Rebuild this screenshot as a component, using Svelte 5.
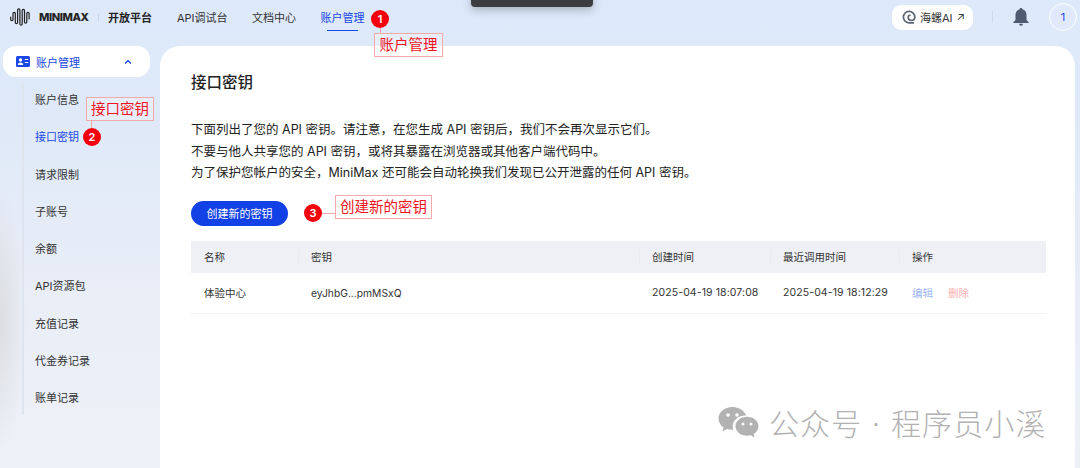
<script>
  const nav = [
    { label: 'API调试台' },
    { label: '文档中心' },
    { label: '账户管理', active: true }
  ];
  const side = [
    { label: '账户信息' },
    { label: '接口密钥', active: true },
    { label: '请求限制' },
    { label: '子账号' },
    { label: '余额' },
    { label: 'API资源包' },
    { label: '充值记录' },
    { label: '代金券记录' },
    { label: '账单记录' }
  ];
</script>

<div class="page">
  <header class="top">
    <div class="logo">
      <svg width="23" height="18" viewBox="0 0 23 18" fill="none" stroke="#222" stroke-width="1.200" stroke-linecap="round">
        <path d="M.7 9v2.500a1.150 1.150 0 0 0 2.300 0V5.500a1.150 1.150 0 0 1 2.300 0v9a1.150 1.150 0 0 0 2.300 0V2a1.150 1.150 0 0 1 2.300 0v14a1.150 1.150 0 0 0 2.300 0V2.500a1.150 1.150 0 0 1 2.300 0v11.500a1.150 1.150 0 0 0 2.300 0V5.500a1.150 1.150 0 0 1 2.300 0v5.500" />
      </svg>
      <span class="wordmark">MINIMAX</span>
    </div>
    <span class="tick"></span>
    <span class="platform">开放平台</span>
    <nav class="nav">
      {#each nav as n}
        <span class="nav-item" class:active={n.active}>{n.label}</span>
      {/each}
    </nav>
    <div class="top-right">
      <div class="hailuo">
        <svg width="14" height="14" viewBox="0 0 14 14" fill="none" stroke="#5c6672" stroke-width="1.700">
          <path d="M12 12.800H6.800A5.700 5.700 0 1 1 12.800 7c0 2.200-1.400 3.500-3.400 3.500S6.200 9 6.200 7.300 7.400 5 8.600 5.600" />
        </svg>
        <span>海螺AI</span>
        <span class="arrow">↗</span>
      </div>
      <span class="divider"></span>
      <svg class="bell" width="16" height="18" viewBox="0 0 16 18">
        <path fill="#4d5a70" d="M8 0c.8 0 1.300.5 1.400 1.200C12 1.900 13.500 4.200 13.500 7v5l2.200 2.200V15H.3v-.8L2.500 12V7c0-2.800 1.500-5.100 4.100-5.800C6.700.5 7.200 0 8 0z" />
        <path fill="#4d5a70" d="M6 15.800h4c0 1.300-.9 2-2 2s-2-.7-2-2z" />
      </svg>
      <span class="avatar">1</span>
    </div>
  </header>

  <div class="body">
    <aside class="side">
      <div class="group">
        <svg width="14" height="11" viewBox="0 0 14 11">
          <rect width="14" height="11" rx="1.500" fill="#1a47e5" />
          <circle cx="4.500" cy="4" r="1.700" fill="#fff" />
          <path d="M1.800 9c.2-1.700 1.300-2.400 2.700-2.400S7 7.300 7.200 9z" fill="#fff" />
          <path d="M8.800 3.500h3.500M8.800 6.500h3.500" stroke="#fff" stroke-width="1" />
        </svg>
        <span>账户管理</span>
        <svg class="chev" width="8" height="6" viewBox="0 0 8 6" fill="none" stroke="#1a47e5" stroke-width="1.400">
          <path d="M1 4.500L4 1.800l3 2.700" />
        </svg>
      </div>
      <ul class="menu">
        {#each side as s}
          <li class:active={s.active}>{s.label}</li>
        {/each}
      </ul>
    </aside>

    <main class="card">
      <h1>接口密钥</h1>
      <div class="intro">
        <p>下面列出了您的 API 密钥。请注意，在您生成 API 密钥后，我们不会再次显示它们。</p>
        <p>不要与他人共享您的 API 密钥，或将其暴露在浏览器或其他客户端代码中。</p>
        <p>为了保护您帐户的安全，MiniMax 还可能会自动轮换我们发现已公开泄露的任何 API 密钥。</p>
      </div>
      <button class="create">创建新的密钥</button>
      <div class="table">
        <div class="row head">
          <span>名称</span><span class="sep">密钥</span><span class="sep">创建时间</span><span class="sep">最近调用时间</span><span class="sep">操作</span>
        </div>
        <div class="row data">
          <span>体验中心</span>
          <span class="key">eyJhbG...pmMSxQ</span>
          <span class="time">2025-04-19 18:07:08</span>
          <span class="time">2025-04-19 18:12:29</span>
          <span class="ops"><em class="edit">编辑</em><em class="del">删除</em></span>
        </div>
      </div>
    </main>
  </div>

  <div class="toast"></div>

  <span class="dot d1">1</span>
  <span class="line l1"></span>
  <span class="note n1">账户管理</span>

  <span class="dot d2">2</span>
  <span class="line l2"></span>
  <span class="note n2">接口密钥</span>

  <span class="dot d3">3</span>
  <span class="line l3"></span>
  <span class="note n3">创建新的密钥</span>

  <div class="mark">
    <svg width="43" height="36" viewBox="0 0 42 36">
      <path fill="#b2b2b2" d="M15 1C7 1 1 6.200 1 12.500c0 3.600 2 6.800 5 8.900L4.800 25.500l4.800-2.500c1.600.5 3.300.8 5.100.8h1.100c-.4-1.200-.6-2.400-.6-3.600 0-6 5.700-10.800 12.700-10.800h.9C26.900 4.800 21.500 1 15 1z" />
      <path fill="#b2b2b2" d="M41 20.200c0-5.300-5.200-9.500-11.500-9.500S18 14.900 18 20.200s5.200 9.500 11.500 9.500c1.300 0 2.600-.2 3.800-.5l3.900 2.200-1-3.500c2.900-1.800 4.800-4.600 4.800-7.700z" />
      <circle cx="10.500" cy="9" r="1.800" fill="#fff" /><circle cx="19.500" cy="9" r="1.800" fill="#fff" />
      <circle cx="25.500" cy="18" r="1.500" fill="#fff" /><circle cx="33.500" cy="18" r="1.500" fill="#fff" />
    </svg>
    <span>公众号 · 程序员小溪</span>
  </div>
</div>

<style>
  :global(body) {
    margin: 0;
    background: #eef1f7;
  }
  .page {
    position: relative;
    width: 1080px;
    height: 468px;
    overflow: hidden;
    background:
      radial-gradient(ellipse 26px 130px at 0 320px, #dcdde0 0, rgba(222, 223, 226, 0) 100%),
      linear-gradient(180deg, #dde9fa 0, #dfe9f8 120px, #e9eef7 300px, #eef0f7 468px);
    font-family: Inter, "Noto Sans CJK SC", sans-serif;
    color: #222;
  }
  .top {
    height: 46px;
    display: flex;
    align-items: center;
    padding: 0 3px 12px 10px;
    box-sizing: border-box;
    font-size: 11px;
  }
  .logo {
    display: flex;
    align-items: center;
    gap: 6px;
  }
  .wordmark {
    width: 49px;
    font-weight: 800;
    font-size: 11px;
    letter-spacing: -0.4px;
    white-space: nowrap;
    color: #222;
  }
  .tick {
    width: 1px;
    height: 7px;
    background: #cdd6e4;
    margin: 0 9px 0 10px;
  }
  .platform {
    font-weight: 700;
    color: #222;
  }
  .nav {
    display: flex;
    gap: 24.500px;
    margin-left: 25px;
  }
  .nav-item {
    position: relative;
    color: #333;
  }
  .nav-item.active {
    color: #1a47e5;
  }
  .nav-item.active::after {
    content: '';
    position: absolute;
    left: 6px;
    right: 7px;
    bottom: -6px;
    height: 1.500px;
    background: #1a47e5;
  }
  .top-right {
    margin-left: auto;
    display: flex;
    align-items: center;
  }
  .hailuo {
    display: flex;
    align-items: center;
    gap: 4px;
    height: 25px;
    width: 81px;
    box-sizing: border-box;
    padding-left: 10px;
    background: #fff;
    border-radius: 9px;
    color: #333;
    font-size: 11px;
  }
  .arrow {
    font-size: 11px;
  }
  .divider {
    width: 1px;
    height: 12px;
    background: #cfd9e8;
    margin: 0 20px 0 19px;
  }
  .bell {
    margin-right: 20px;
  }
  .avatar {
    width: 28px;
    height: 28px;
    box-sizing: border-box;
    display: flex;
    align-items: center;
    justify-content: center;
    border-radius: 50%;
    border: 1px solid #fff;
    background: #e1eafc;
    color: #1a47e5;
    font-size: 11px;
  }
  .body {
    display: flex;
    height: 422px;
  }
  .side {
    width: 160px;
    flex: none;
    box-sizing: border-box;
    padding-left: 3px;
  }
  .group {
    width: 147px;
    height: 31px;
    box-sizing: border-box;
    background: #fff;
    border-radius: 13px;
    display: flex;
    align-items: center;
    padding: 0 18px 0 13px;
    gap: 6px;
    font-size: 11px;
    color: #1a47e5;
  }
  .chev {
    margin-left: auto;
  }
  .menu {
    list-style: none;
    margin: 6px 0 0 19px;
    padding: 0 0 0 11px;
    border-left: 2px solid #dfe5ef;
    font-size: 11px;
    color: #333;
  }
  .menu li {
    height: 37.250px;
    line-height: 35px;
  }
  .menu li:last-child {
    height: 34px;
  }
  .menu li.active {
    color: #1a47e5;
  }
  .card {
    width: 915px;
    flex: none;
    box-sizing: border-box;
    background: #fff;
    border-radius: 20px 20px 0 0;
    padding: 26px 31px 0;
  }
  h1 {
    margin: 0;
    font-size: 15.500px;
    font-weight: 500;
    line-height: 21px;
    color: #222;
  }
  .intro {
    margin-top: 26px;
    font-size: 12.500px;
    line-height: 21.500px;
    color: #222;
  }
  .intro p {
    margin: 0;
  }
  .create {
    display: block;
    margin-top: 17px;
    width: 97px;
    height: 25px;
    border: 0;
    border-radius: 13px;
    background: #1241e6;
    color: #fff;
    font: inherit;
    font-size: 11px;
  }
  .table {
    margin-top: 15px;
    width: 855px;
    font-size: 10.500px;
    color: #333;
  }
  .row {
    display: grid;
    grid-template-columns: 107px 341px 131px 129px 1fr;
    align-items: center;
    padding-left: 13px;
  }
  .head {
    height: 32px;
    background: #eef0f5;
  }
  .sep {
    position: relative;
  }
  .sep::before {
    content: '';
    position: absolute;
    left: -13px;
    top: 0;
    bottom: 0;
    width: 1px;
    background: #e9ebf0;
  }
  .data {
    height: 40px;
    border-bottom: 1px solid #f0f1f4;
  }
  .key {
    font-size: 10.300px;
  }
  .time {
    letter-spacing: 0.1px;
  }
  .ops {
    display: flex;
    gap: 15px;
  }
  .ops em {
    font-style: normal;
  }
  .edit {
    color: #9fb8f8;
  }
  .del {
    color: #fdb0b0;
  }
  .toast {
    position: absolute;
    left: 471px;
    top: -10px;
    width: 122px;
    height: 17px;
    border-radius: 4px;
    background: #3a3c40;
    box-shadow: 0 3px 9px rgba(0, 0, 0, 0.25);
  }
  .dot {
    position: absolute;
    width: 18px;
    height: 18px;
    border-radius: 50%;
    background: #f4000c;
    color: #fff;
    font-size: 11px;
    font-weight: 600;
    display: flex;
    align-items: center;
    justify-content: center;
  }
  .d1 { left: 371px; top: 10px; }
  .d2 { left: 83px; top: 128px; }
  .d3 { left: 304px; top: 204px; }
  .line {
    position: absolute;
    background: #f6a9ac;
  }
  .l1 { left: 380px; top: 28px; width: 1px; height: 6px; }
  .l2 { left: 91px; top: 120px; width: 1px; height: 8px; }
  .l3 { left: 322px; top: 213px; width: 13px; height: 1px; }
  .note {
    position: absolute;
    box-sizing: border-box;
    height: 24px;
    border: 1px solid #f6a9ac;
    color: #f0141e;
    font-size: 14.500px;
    line-height: 22px;
    text-align: center;
    background: rgba(255, 255, 255, 0.25);
  }
  .n1 { left: 374px; top: 33px; width: 69px; }
  .n2 { left: 86px; top: 97px; width: 68px; }
  .n3 { left: 335px; top: 195px; width: 97px; background: #fff; }
  .mark {
    position: absolute;
    left: 717px;
    top: 404px;
    display: flex;
    align-items: center;
    gap: 9px;
    color: #b2b2b2;
    font-size: 30px;
    font-weight: 300;
    letter-spacing: 1.100px;
    line-height: 40px;
    white-space: nowrap;
  }
</style>
